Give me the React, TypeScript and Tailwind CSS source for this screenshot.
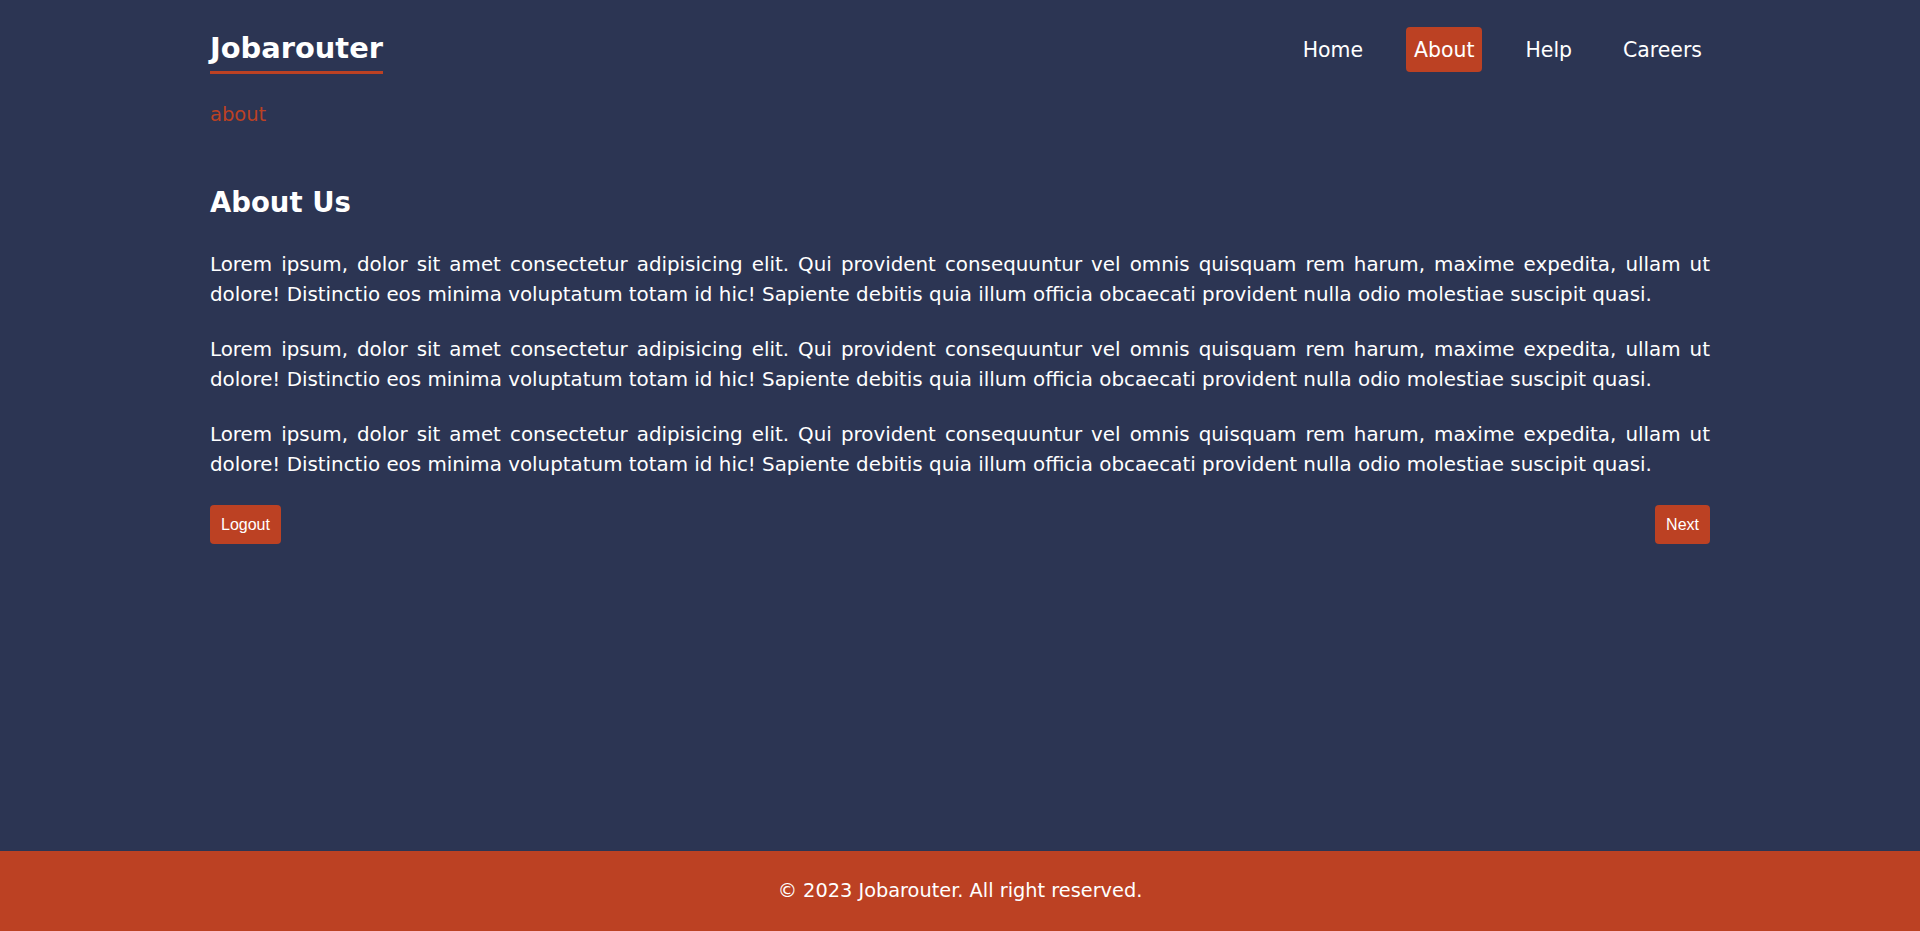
const lorem =
  'Lorem ipsum, dolor sit amet consectetur adipisicing elit. Qui provident consequuntur vel omnis quisquam rem harum, maxime expedita, ullam ut dolore! Distinctio eos minima voluptatum totam id hic! Sapiente debitis quia illum officia obcaecati provident nulla odio molestiae suscipit quasi.';

const links = ['Home', 'About', 'Help', 'Careers'];

export default function App() {
  return (
    <div className="min-h-screen flex flex-col bg-[#2c3553] text-white font-['DejaVu_Sans',sans-serif]">
      <main className="flex-1 w-[1500px] mx-auto">
        <header className="flex items-start justify-between pt-[27px]">
          <div className="mt-[3px] text-[28.88px] font-bold leading-[36px] pb-[5px] border-b-[3px] border-[#bc4123]">
            Jobarouter
          </div>
          <nav className="flex gap-[35px] text-[20.45px]">
            {links.map(l => (
              <a
                key={l}
                href="#"
                className={`px-2 h-[45px] leading-[46px] rounded ${l === 'About' ? 'bg-[#bc4123]' : ''}`}
              >
                {l}
              </a>
            ))}
          </nav>
        </header>

        <p className="mt-[27px] text-[#bc4123] text-[19.5px] font-normal leading-[28px]">about</p>

        <h1 className="mt-[57px] text-[27.5px] font-bold leading-[33px]">About Us</h1>

        <div className="mt-[31px] flex flex-col gap-[25px] text-[19.86px] leading-[30px] text-justify">
          <p>{lorem}</p>
          <p>{lorem}</p>
          <p>{lorem}</p>
        </div>

        <div className="flex justify-between mt-[25px] font-['Liberation_Sans',Arial,sans-serif]">
          <button className="bg-[#bc4123] text-white text-[16px] leading-[19px] px-[11px] h-[39px] rounded">Logout</button>
          <button className="bg-[#bc4123] text-white text-[16px] leading-[19px] px-[11px] h-[39px] rounded">Next</button>
        </div>
      </main>

      <footer className="h-[80px] bg-[#bc4123] flex items-center justify-center text-[19.34px]">
        © 2023 Jobarouter. All right reserved.
      </footer>
    </div>
  );
}
